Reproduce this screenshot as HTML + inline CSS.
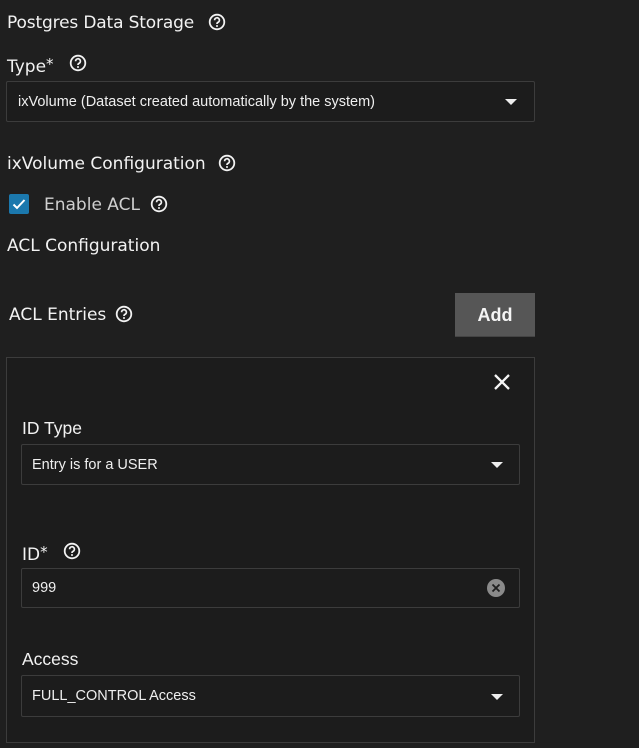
<!DOCTYPE html>
<html><head><meta charset="utf-8"><style>
html,body{margin:0;padding:0;width:639px;height:748px;background:#1f1f1f;overflow:hidden;font-family:"Liberation Sans",sans-serif;color:#f0f0f0}
.a{position:absolute}
.t{font-family:"DejaVu Sans","Liberation Sans",sans-serif;font-size:17px;line-height:20px;color:#f2f2f2;white-space:nowrap}
.box{position:absolute;border:1px solid #3c3c3c;border-radius:2px;background:#1c1c1c;box-sizing:border-box}
.v{position:absolute;font-size:14.5px;line-height:16px;color:#efefef;white-space:nowrap}
.arr{position:absolute;width:0;height:0;border-left:6px solid transparent;border-right:6px solid transparent;border-top:6px solid #eee}
svg.h{position:absolute}
</style></head><body>
<svg width="0" height="0" style="position:absolute"><defs><g id="q"><circle cx="9" cy="9" r="7.3" fill="none" stroke="#f2f2f2" stroke-width="1.8"/><path d="M6.6 7.2a2.4 2.4 0 1 1 3.3 2.2c-.7.3-.9.8-.9 1.6" fill="none" stroke="#f2f2f2" stroke-width="1.7"/><circle cx="9" cy="13" r="1" fill="#f2f2f2"/></g></defs></svg>

<div class="a t" style="left:7px;top:13px;letter-spacing:-0.15px">Postgres Data Storage</div>
<svg class="h" style="left:208px;top:13px" width="18" height="18"><use href="#q"/></svg>

<div class="a t" style="left:7px;top:54px">Type<span style="font-size:15px;vertical-align:3px">*</span></div>
<svg class="h" style="left:69px;top:54px" width="18" height="18"><use href="#q"/></svg>

<div class="box" style="left:6px;top:81px;width:529px;height:41px"></div>
<div class="v" style="left:18px;top:94px">ixVolume (Dataset created automatically by the system)</div>
<div class="arr" style="left:505px;top:99px"></div>

<div class="a t" style="left:7px;top:154px">ixVolume Configuration</div>
<svg class="h" style="left:218px;top:154px" width="18" height="18"><use href="#q"/></svg>

<div class="a" style="left:9px;top:194px;width:20px;height:20px;background:#1b78ad;border-radius:2px"></div>
<svg class="a" style="left:9px;top:194px" width="20" height="20"><path d="M4.5 10.5l3.5 3.5 7.5-8" fill="none" stroke="#fff" stroke-width="2"/></svg>
<div class="a t" style="left:44px;top:195px;color:#cfcfcf">Enable ACL</div>
<svg class="h" style="left:150px;top:195px" width="18" height="18"><use href="#q"/></svg>

<div class="a t" style="left:7px;top:236px">ACL Configuration</div>

<div class="a t" style="left:9px;top:305px">ACL Entries</div>
<svg class="h" style="left:115px;top:305px" width="18" height="18"><use href="#q"/></svg>
<div class="a" style="left:455px;top:293px;width:80px;height:44px;background:#565656;border-bottom:1px solid #444;box-sizing:border-box;text-align:center;line-height:45px;font-weight:bold;font-size:18px;color:#f5f5f5">Add</div>

<div class="a" style="left:6px;top:357px;width:529px;height:386px;border:1px solid #3c3c3c;box-sizing:border-box;background:#1c1c1c"></div>
<svg class="a" style="left:492px;top:372px" width="20" height="20"><path d="M3 3L17 17M17 3L3 17" stroke="#f5f5f5" stroke-width="2.3"/></svg>

<div class="a" style="left:22px;top:418px;font-size:17.5px;line-height:20px;color:#f2f2f2">ID Type</div>
<div class="box" style="left:21px;top:444px;width:499px;height:41px"></div>
<div class="v" style="left:32px;top:457px">Entry is for a USER</div>
<div class="arr" style="left:491px;top:462px"></div>

<div class="a t" style="left:22px;top:542px">ID<span style="font-size:15px;vertical-align:3px">*</span></div>
<svg class="h" style="left:63px;top:542px" width="18" height="18"><use href="#q"/></svg>
<div class="box" style="left:21px;top:568px;width:499px;height:40px"></div>
<div class="v" style="left:32px;top:580px">999</div>
<svg class="a" style="left:486px;top:578px" width="20" height="20"><circle cx="10" cy="10" r="9" fill="#8a8a8a"/><path d="M6.5 6.5L13.5 13.5M13.5 6.5L6.5 13.5" stroke="#1e1e1e" stroke-width="1.8"/></svg>

<div class="a" style="left:22px;top:649px;font-size:17.5px;line-height:20px;color:#f2f2f2">Access</div>
<div class="box" style="left:21px;top:675px;width:499px;height:42px"></div>
<div class="v" style="left:32px;top:688px">FULL_CONTROL Access</div>
<div class="arr" style="left:491px;top:694px"></div>
</body></html>
